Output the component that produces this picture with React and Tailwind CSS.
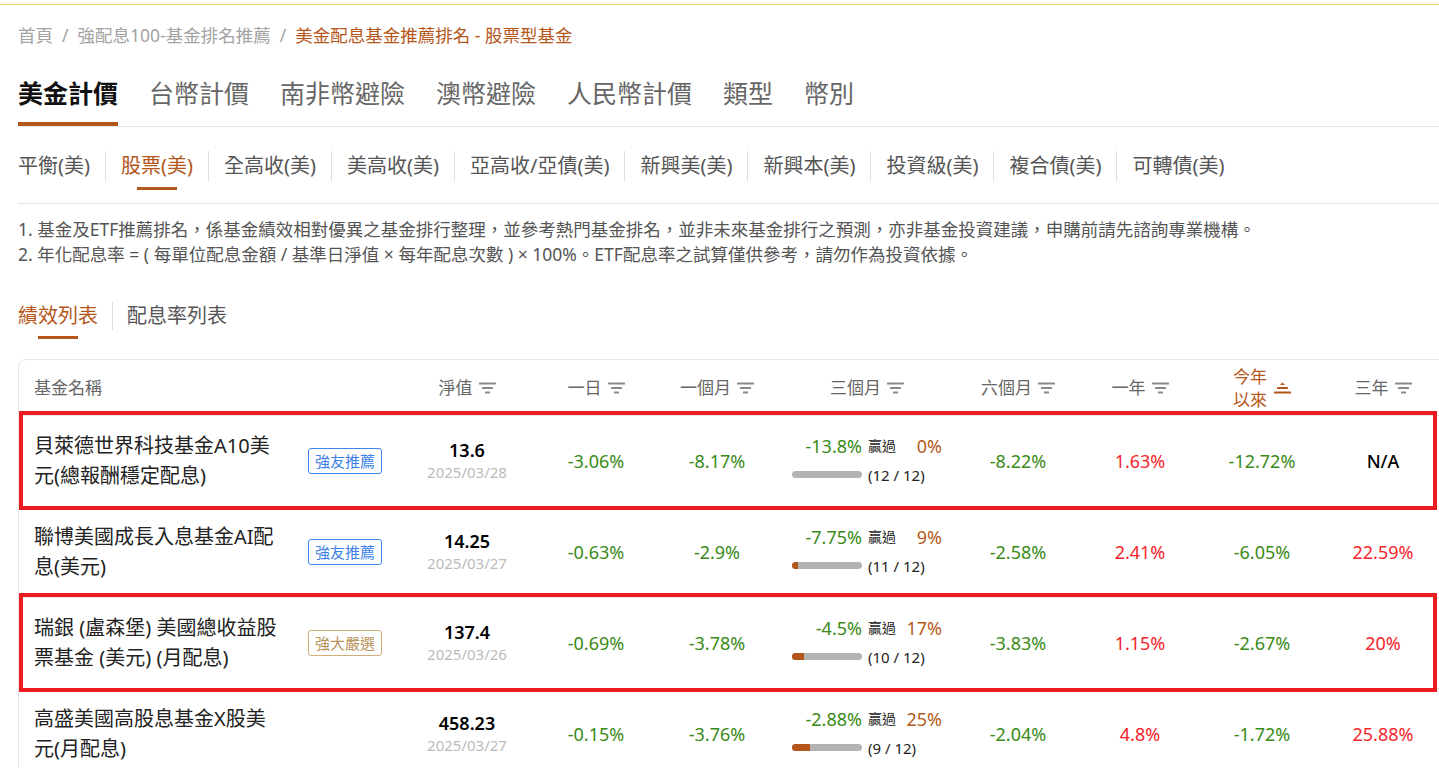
import { Fragment } from 'react';

const FONT = "font-['Noto_Sans','Noto_Sans_CJK_TC',sans-serif]";

const mainTabs = ['美金計價', '台幣計價', '南非幣避險', '澳幣避險', '人民幣計價', '類型', '幣別'];
const subTabs = ['平衡(美)', '股票(美)', '全高收(美)', '美高收(美)', '亞高收/亞債(美)', '新興美(美)', '新興本(美)', '投資級(美)', '複合債(美)', '可轉債(美)'];

const columns = [
  { label: '淨值' },
  { label: '一日' },
  { label: '一個月' },
  { label: '三個月' },
  { label: '六個月' },
  { label: '一年' },
  { label: '今年以來', active: true },
  { label: '三年' },
];

const funds = [
  {
    name: '貝萊德世界科技基金A10美元(總報酬穩定配息)',
    badge: 'friend',
    nav: '13.6',
    date: '2025/03/28',
    d1: '-3.06%',
    m1: '-8.17%',
    m3: '-13.8%',
    beat: 0,
    rank: '(12 / 12)',
    m6: '-8.22%',
    y1: '1.63%',
    ytd: '-12.72%',
    y3: 'N/A',
    marked: true,
  },
  {
    name: '聯博美國成長入息基金AI配息(美元)',
    badge: 'friend',
    nav: '14.25',
    date: '2025/03/27',
    d1: '-0.63%',
    m1: '-2.9%',
    m3: '-7.75%',
    beat: 9,
    rank: '(11 / 12)',
    m6: '-2.58%',
    y1: '2.41%',
    ytd: '-6.05%',
    y3: '22.59%',
  },
  {
    name: '瑞銀 (盧森堡) 美國總收益股票基金 (美元) (月配息)',
    badge: 'pick',
    nav: '137.4',
    date: '2025/03/26',
    d1: '-0.69%',
    m1: '-3.78%',
    m3: '-4.5%',
    beat: 17,
    rank: '(10 / 12)',
    m6: '-3.83%',
    y1: '1.15%',
    ytd: '-2.67%',
    y3: '20%',
    marked: true,
  },
  {
    name: '高盛美國高股息基金X股美元(月配息)',
    nav: '458.23',
    date: '2025/03/27',
    d1: '-0.15%',
    m1: '-3.76%',
    m3: '-2.88%',
    beat: 25,
    rank: '(9 / 12)',
    m6: '-2.04%',
    y1: '4.8%',
    ytd: '-1.72%',
    y3: '25.88%',
  },
];

const GRID = 'grid grid-cols-[383px_130px_128px_114px_186px_116px_128px_116px_126px]';

function FilterIcon() {
  return (
    <svg width="17" height="12" viewBox="0 0 17 12" fill="#8a8a8a">
      <rect x="0" y="0.5" width="17" height="2" rx="0.5" />
      <rect x="3" y="5" width="11" height="2" rx="0.5" />
      <rect x="6" y="9.5" width="5" height="2" rx="0.5" />
    </svg>
  );
}

function SortAscIcon() {
  return (
    <svg width="17" height="12" viewBox="0 0 17 12" fill="#b5561a">
      <path d="M6 3 L8.5 0.5 L11 3 Z" />
      <rect x="3" y="5" width="11" height="2" rx="0.5" />
      <rect x="0" y="9.5" width="17" height="2" rx="0.5" />
    </svg>
  );
}

function Pct({ value, className = '' }) {
  if (value === 'N/A') {
    return <span className={`text-[18px] font-medium text-black ${className}`}>N/A</span>;
  }
  const color = value.startsWith('-') ? 'text-[#3a8a17]' : 'text-[#f5242b]';
  return <span className={`text-[18px] ${color} ${className}`}>{value}</span>;
}

function Badge({ type }) {
  if (type === 'friend') {
    return (
      <span className="ml-[28px] shrink-0 rounded-[3px] border border-[#3d86f2] px-[6px] text-[15px] leading-[24px] text-[#3d7fe6]">
        強友推薦
      </span>
    );
  }
  if (type === 'pick') {
    return (
      <span className="ml-[28px] shrink-0 rounded-[3px] border border-[#cfae7b] px-[6px] text-[15px] leading-[24px] text-[#b8955e]">
        強大嚴選
      </span>
    );
  }
  return null;
}

function ThreeMonth({ fund }) {
  return (
    <div className="flex flex-col pb-[3px]">
      <div className="flex items-center leading-[24px]">
        <span className="w-[70px] text-right">
          <Pct value={fund.m3} />
        </span>
        <span className="ml-[6px] text-[14px] text-[#222]">贏過</span>
        <span className="w-[46px] text-right text-[18px] text-[#b35a1b]">{fund.beat}%</span>
      </div>
      <div className="mt-[5px] flex items-center">
        <div className="h-[7px] w-[70px] overflow-hidden rounded-full bg-[#b3b3b3]">
          <div className="h-full bg-[#b4561b]" style={{ width: `${fund.beat * 0.7}px` }} />
        </div>
        <span className="ml-[6px] text-[15px] leading-[22px] text-[#222]">{fund.rank}</span>
      </div>
    </div>
  );
}

function FundRow({ fund }) {
  return (
    <div className={`${GRID} relative h-[91px] border-b border-[#e6e6e6]`}>
      <div className="flex items-center pl-[15px]">
        <span className="w-[246px] text-[20px] leading-[30px] text-[#222]">{fund.name}</span>
        <Badge type={fund.badge} />
      </div>
      <div className="flex flex-col items-center justify-center">
        <span className="text-[18px] font-semibold leading-[22px] text-black">{fund.nav}</span>
        <span className="text-[15px] leading-[22px] text-[#bbbbbb]">{fund.date}</span>
      </div>
      <div className="flex items-center justify-center">
        <Pct value={fund.d1} />
      </div>
      <div className="flex items-center justify-center">
        <Pct value={fund.m1} />
      </div>
      <div className="flex items-center justify-center">
        <ThreeMonth fund={fund} />
      </div>
      <div className="flex items-center justify-center">
        <Pct value={fund.m6} />
      </div>
      <div className="flex items-center justify-center">
        <Pct value={fund.y1} />
      </div>
      <div className="flex items-center justify-center">
        <Pct value={fund.ytd} />
      </div>
      <div className="flex items-center justify-center">
        <Pct value={fund.y3} />
      </div>
      {fund.marked && (
        <div className="pointer-events-none absolute bottom-[-4px] left-0 top-[-5px] z-10 w-[1418px] border-4 border-[#ec1c24]" />
      )}
    </div>
  );
}

export default function App() {
  return (
    <div className={`h-screen w-full overflow-hidden bg-white ${FONT}`}>
      <div className="h-[5px] border-b border-[#ecd07a]" />
      <div className="pl-[18px]">
        {/* breadcrumb */}
        <div className="mt-[18px] flex items-center text-[17.5px] leading-[24px] text-[#a3a3a3]">
          <span>首頁</span>
          <span className="mx-[9px]">/</span>
          <span>強配息100-基金排名推薦</span>
          <span className="mx-[9px]">/</span>
          <span className="text-[#b5561a]">美金配息基金推薦排名 - 股票型基金</span>
        </div>

        {/* currency tabs */}
        <div className="mt-[29px] flex gap-[31px] border-b border-[#e3e3e3]">
          {mainTabs.map((t, i) => (
            <div key={t} className="flex flex-col">
              <span className={`text-[25px] leading-[34px] ${i === 0 ? 'font-bold text-[#111]' : 'text-[#666]'}`}>{t}</span>
              <div className={`mt-[12px] h-[4px] ${i === 0 ? 'bg-[#b5561a]' : 'bg-transparent'}`} />
            </div>
          ))}
        </div>

        {/* category tabs */}
        <div className="flex border-b border-[#e3e3e3] pb-[13px] pt-[24px]">
          {subTabs.map((t, i) => (
            <Fragment key={t}>
              {i > 0 && <div className="mx-[15px] h-[30px] w-px shrink-0 bg-[#dddddd]" />}
              <div className="flex flex-col items-center">
                <span className={`whitespace-nowrap text-[20px] leading-[30px] ${i === 1 ? 'text-[#b5561a]' : 'text-[#555]'}`}>{t}</span>
                <div className={`mt-[6px] h-[3px] w-[40px] ${i === 1 ? 'bg-[#b5561a]' : 'bg-transparent'}`} />
              </div>
            </Fragment>
          ))}
        </div>

        {/* notes */}
        <div className="mt-[13px] text-[17.5px] leading-[25px] text-[#555]">
          <p>1. 基金及ETF推薦排名，係基金績效相對優異之基金排行整理，並參考熱門基金排名，並非未來基金排行之預測，亦非基金投資建議，申購前請先諮詢專業機構。</p>
          <p>2. 年化配息率 = ( 每單位配息金額 / 基準日淨值 × 每年配息次數 ) × 100%。ETF配息率之試算僅供參考，請勿作為投資依據。</p>
        </div>

        {/* list switch */}
        <div className="mt-[34px] flex">
          <div className="flex flex-col items-center">
            <span className="text-[20px] leading-[30px] text-[#b5561a]">績效列表</span>
            <div className="mt-[5px] h-[3px] w-[40px] bg-[#b5561a]" />
          </div>
          <div className="mx-[14px] mt-[1px] h-[28px] w-px bg-[#dddddd]" />
          <span className="text-[20px] leading-[30px] text-[#555]">配息率列表</span>
        </div>

        {/* table */}
        <div className="mt-[20px] w-[1429px] rounded-tl-[8px] border border-[#e6e6e6]">
          <div className={`${GRID} h-[56px] border-b border-[#e6e6e6] text-[17px] text-[#666]`}>
            <div className="flex items-center pl-[15px]">基金名稱</div>
            {columns.map((c) => (
              <div key={c.label} className="flex items-center justify-center gap-[6px]">
                {c.active ? (
                  <span className="w-[35px] leading-[23px] text-[#b5561a]">{c.label}</span>
                ) : (
                  <span className="whitespace-nowrap">{c.label}</span>
                )}
                {c.active ? <SortAscIcon /> : <FilterIcon />}
              </div>
            ))}
          </div>
          {funds.map((f) => (
            <FundRow key={f.name} fund={f} />
          ))}
        </div>
      </div>
    </div>
  );
}
